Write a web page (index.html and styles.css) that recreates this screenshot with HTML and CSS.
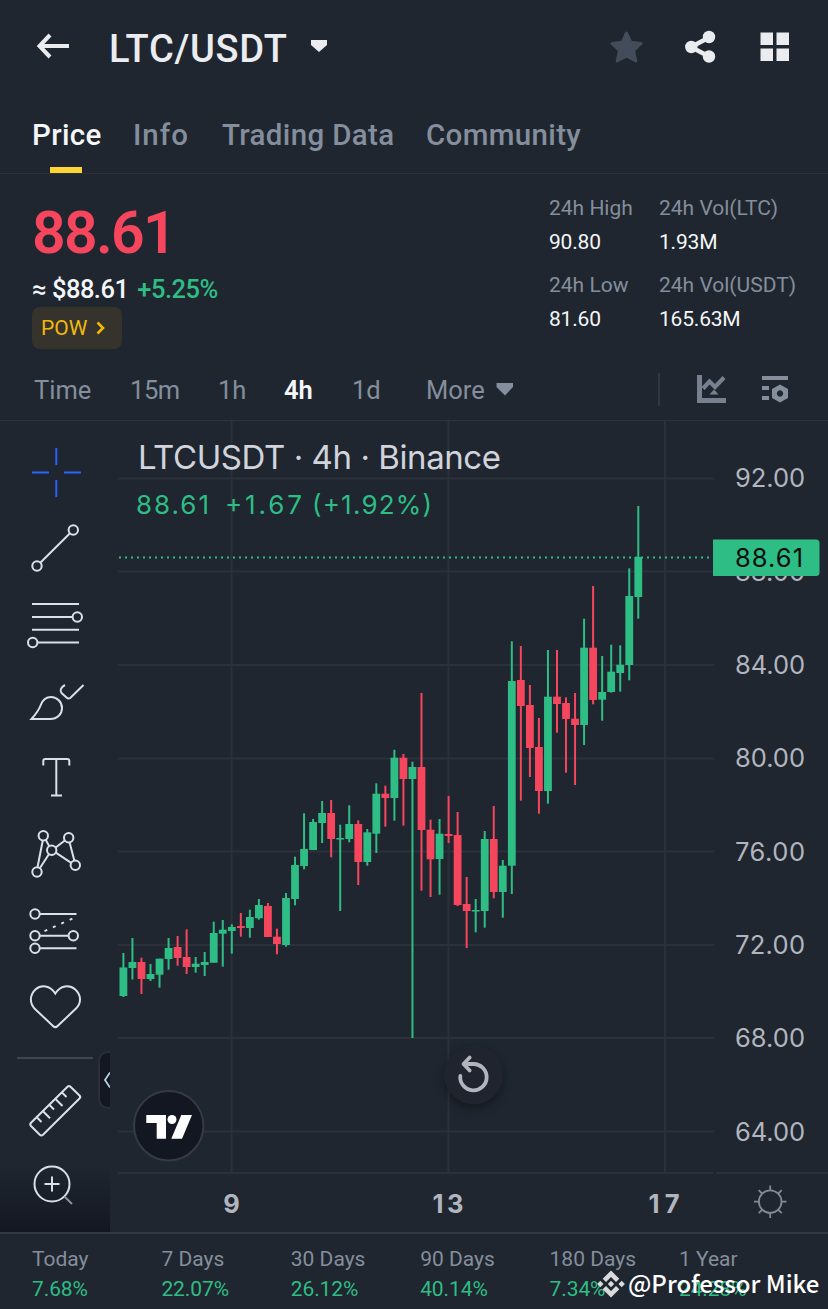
FILE: index.html
```html
<!DOCTYPE html>
<html lang="en">

<head>
    <meta charset="UTF-8">
    <meta name="viewport" content="width=device-width, initial-scale=1.0">
    <title>LTC/USDT</title>
    <link rel="stylesheet" href="styles.css">
</head>

<body>
    <header class="topbar">
        <svg class="back" width="34" height="28" viewBox="0 0 34 28">
            <path d="M14 2 L3.500 13 L14 24 M4 13 H33" fill="none" stroke="#eaecef" stroke-width="4" />
        </svg>
        <h1 class="pair">LTC/USDT</h1>
        <svg class="caret" width="16" height="13" viewBox="0 0 16 13">
            <path d="M0 0 H16 V5 L8 12 L0 5 Z" fill="#eaecef" />
        </svg>
        <div class="actions">
            <svg width="34" height="34" viewBox="0 0 34 34">
                <path d="M16.500 3 L20.800 12.300 L31 13.500 L23.500 20.500 L25.800 31 L16.500 26 L7.200 31 L9.500 20.500 L2 13.500 L12.200 12.300 Z" fill="#434c5a" stroke="#434c5a" stroke-width="3" stroke-linejoin="round" />
            </svg>
            <svg class="share" width="34" height="34" viewBox="0 0 34 34">
                <path d="M26 7.500 L8 17 L26 26.500" fill="none" stroke="#eaecef" stroke-width="4.500" />
                <circle cx="26" cy="7" r="6.200" fill="#eaecef" />
                <circle cx="8.300" cy="17" r="6.200" fill="#eaecef" />
                <circle cx="26" cy="26.500" r="6.200" fill="#eaecef" />
            </svg>
            <svg width="30" height="30" viewBox="0 0 30 30">
                <path d="M0.500 0.500h12.500v12.500h-12.500z M16.500 0.500h12.500v12.500h-12.500z M0.500 16.500h12.500v12.500h-12.500z M16.500 16.500h12.500v12.500h-12.500z" fill="#eaecef" />
            </svg>
        </div>
    </header>

    <nav class="tabs">
        <a class="tab tab-price active">Price</a>
        <a class="tab tab-info">Info</a>
        <a class="tab tab-data">Trading Data</a>
        <a class="tab tab-community">Community</a>
    </nav>

    <section class="summary">
        <div class="quote">
            <div class="last">88.61</div>
            <div class="fiat">≈ $88.61 <span class="up">+5.25%</span></div>
            <a class="tag">POW
                <svg width="9" height="14" viewBox="0 0 9 14">
                    <path d="M1.500 1.500 L7 7 L1.500 12.500" fill="none" stroke="#f0b90b" stroke-width="2.600" />
                </svg>
            </a>
        </div>
        <dl class="stats">
            <div><dt>24h High</dt><dd>90.80</dd></div>
            <div><dt>24h Vol(LTC)</dt><dd>1.93M</dd></div>
            <div><dt>24h Low</dt><dd>81.60</dd></div>
            <div><dt>24h Vol(USDT)</dt><dd>165.63M</dd></div>
        </dl>
    </section>

    <div class="intervals">
        <span class="iv iv-time">Time</span>
        <span class="iv iv-15m">15m</span>
        <span class="iv iv-1h">1h</span>
        <span class="iv iv-4h active">4h</span>
        <span class="iv iv-1d">1d</span>
        <span class="iv iv-more">More</span>
        <svg width="18" height="13" viewBox="0 0 18 13">
            <path d="M0.500 0 H17 V4 L9 12.500 L0.500 4 Z" fill="#848e9c" />
        </svg>
        <div class="tools">
            <svg width="30" height="30" viewBox="0 0 30 30">
                <path d="M2.500 1 V26.500 H29" fill="none" stroke="#76808f" stroke-width="5" />
                <path d="M6 14.500 L12.500 7.500 L18 13 L27 3.500" fill="none" stroke="#76808f" stroke-width="4.200" />
                <path d="M12.500 20.500 L17 15.500 L21.500 20.500 Z" fill="#76808f" />
            </svg>
            <svg width="28" height="28" viewBox="0 0 28 28">
                <path d="M1 1h26v4h-26z M1 11h7v4h-7z M1 21h7v4h-7z" fill="#848e9c" />
                <path fill-rule="evenodd" d="M19 9.500 L27 14 V23 L19 27.500 L11 23 V14 Z M19 15.300 a3.200 3.200 0 1 0 .01 0 Z" fill="#848e9c" />
            </svg>
        </div>
    </div>

    <main class="chart">
        <aside class="toolbar">
            <svg class="tool cross" viewBox="0 0 110 76">
                <path d="M56.300 14 V31 M56.300 46 V63 M32 38.500 H49 M64 38.500 H81" />
            </svg>
            <svg class="tool" viewBox="0 0 110 76">
                <path d="M40.300 52.700 L70 23.300" />
                <circle cx="73.300" cy="20" r="4.700" />
                <circle cx="37" cy="56" r="4.700" />
            </svg>
            <svg class="tool" viewBox="0 0 110 76">
                <path d="M32 18 H79 M32 31 H72.500 M32 43.700 H79 M37.500 56.500 H79" />
                <circle cx="77.300" cy="31" r="4.700" />
                <circle cx="32.700" cy="56.500" r="4.700" />
            </svg>
            <svg class="tool" viewBox="0 0 110 76">
                <path d="M65 23 C61 25 59.500 28.500 61.500 31 L66.500 35.500 Q68.500 37.300 70.500 35.700 L83.500 23" />
                <path d="M31.500 57 H50 C57.500 57 62 52 62 46 C62 40 57 35 51 35 C46.500 35 43 37.500 41 42.500 C39 48 36 52 31.500 57 Z" />
            </svg>
            <svg class="tool" viewBox="0 0 110 76">
                <path d="M43.300 27.500 V23 Q43.300 21 45.300 21 H67.300 Q69.300 21 69.300 23 V27.500 M56.300 21 V57.500 M51 57.500 H62" />
            </svg>
            <svg class="tool" viewBox="0 0 110 76">
                <path d="M42.800 26.300 L37.500 53.300 M45.700 25.700 L49.300 32.300 M55.700 33.500 L64.800 26.500 M69.600 28.400 L74.400 46.700 M55.800 38.700 L71.200 48.900 M48.900 40.200 L39.800 54.200" />
                <circle cx="43.300" cy="21.700" r="4.700" />
                <circle cx="68.700" cy="23.700" r="4.700" />
                <circle cx="51.700" cy="36.300" r="4.700" />
                <circle cx="37" cy="58" r="4.700" />
                <circle cx="75.300" cy="51.300" r="4.700" />
            </svg>
            <svg class="tool" viewBox="0 0 110 76">
                <path d="M40 24 H76.500 M40 45.700 H68.500 M40 58.300 H76.500" />
                <path d="M44.500 41.200 L72.500 28.500" stroke-dasharray="3 6.200" />
                <circle cx="35" cy="24" r="4.700" />
                <circle cx="35" cy="45.700" r="4.700" />
                <circle cx="73.300" cy="45.700" r="4.700" />
                <circle cx="35" cy="58.300" r="4.700" />
            </svg>
            <svg class="tool" viewBox="0 0 110 76">
                <path d="M55.300 27.500 C50 19 41 18.500 35.700 23.300 C29.500 29 29.500 37 34.500 42.500 L53 60 Q55.300 62.300 57.600 60 L76 42.500 C81.500 37 81.500 29 75 23.300 C69.500 18.500 60.500 19 55.300 27.500 Z" />
            </svg>
            <hr class="sep">
            <svg class="tool" viewBox="0 0 110 76">
                <path d="M67.500 15.700 Q69 14.200 70.500 15.700 L79.500 24.500 Q81 26 79.500 27.500 L43 63.800 Q41.300 65.300 39.800 63.800 L31 55 Q29.500 53.300 31 51.800 Z" />
                <path d="M37 46.500 L41.500 51 M43 40.300 L50 47.300 M49.500 34 L54 38.500 M55.500 28 L62.500 35 M62 21.500 L66.500 26" />
            </svg>
            <svg class="tool" viewBox="0 0 110 76">
                <circle cx="52" cy="37" r="17.500" />
                <path d="M44.500 37 H59.500 M52 29.500 V44.500" />
                <path d="M64.500 49.500 L72 57" stroke="#8c9099" />
            </svg>
            <div class="collapse">
                <svg width="8" height="16" viewBox="0 0 8 16">
                    <path d="M8 0.500 L3 8 L8 15.500" fill="none" stroke="#b5d0dc" stroke-width="1.800" />
                </svg>
            </div>
        </aside>

        <div class="plot">
            <svg class="plot-svg" width="718" height="811" viewBox="110 421 718 811">
                <path class="grid" d="M231.500 421 V1172 M448.500 421 V1172 M665 421 V1172 M118 478.500 H714 M118 571.500 H714 M118 665 H714 M118 758.500 H714 M118 851.500 H714 M118 945 H714 M118 1038 H714 M118 1131.500 H714 M118 1173 H713.500 M716 1173 H828" />
                <g id="candles"></g>
                <path class="last-line" d="M119 557.500 H713" />
                <g class="axis">
                    <text x="735" y="487" textLength="70">92.00</text>
                    <text x="735" y="580.500" textLength="70">88.00</text>
                    <text x="735" y="674" textLength="70">84.00</text>
                    <text x="735" y="767" textLength="70">80.00</text>
                    <text x="735" y="860.500" textLength="70">76.00</text>
                    <text x="735" y="954" textLength="70">72.00</text>
                    <text x="735" y="1047" textLength="70">68.00</text>
                    <text x="735" y="1140.500" textLength="70">64.00</text>
                </g>
                <path d="M713 539.500 H816 Q819.500 539.500 819.500 543 V572.500 Q819.500 576 816 576 H713 Z" fill="#2ebd85" />
                <text class="price-label" x="735" y="566.500" textLength="68">88.61</text>
                <g class="dates">
                    <text x="231.500" y="1213">9</text>
                    <text x="448" y="1213" textLength="31">13</text>
                    <text x="664" y="1213" textLength="31">17</text>
                </g>
                <g fill="none" stroke="#848993" stroke-width="1.800">
                    <circle cx="770.200" cy="1201.700" r="11.300" />
                    <path d="M770.200 1190 v-4.500 M770.200 1213.500 v4.500 M758.500 1201.700 h-4.500 M782 1201.700 h4.500 M762 1193.500 l-3.300 -3.300 M778.400 1193.500 l3.300 -3.300 M762 1209.900 l-3.300 3.300 M778.400 1209.900 l3.300 3.300" />
                </g>
                <text class="legend-title" x="138" y="469" textLength="363">LTCUSDT · 4h · Binance</text>
                <g class="legend-values">
                    <text x="136" y="514" textLength="73">88.61</text>
                    <text x="225" y="514" textLength="77">+1.67</text>
                    <text x="312" y="514" textLength="120">(+1.92%)</text>
                </g>
                <circle cx="168.700" cy="1125.700" r="34.700" fill="#131722" stroke="#363a45" stroke-width="2" />
                <path d="M146.300 1115 H166 V1138.700 H156.700 V1123 H146.300 Z M181.300 1115 H192 L182 1138.700 H171.300 Z" fill="#fff" />
                <circle cx="172" cy="1119.500" r="4.500" fill="#fff" />
                <circle class="reset" cx="473.700" cy="1074.700" r="29.500" />
                <path d="M460.300 1076 A13.200 13.200 0 1 0 473.500 1064 H464 M469.700 1057.500 L463.500 1064 L469.700 1070.500" fill="none" stroke="#b2b5be" stroke-width="3.800" stroke-linecap="round" stroke-linejoin="round" />
            </svg>
        </div>
    </main>

    <footer class="periods">
        <div><span>Today</span><b>7.68%</b></div>
        <div><span>7 Days</span><b>22.07%</b></div>
        <div><span>30 Days</span><b>26.12%</b></div>
        <div><span>90 Days</span><b>40.14%</b></div>
        <div><span>180 Days</span><b>7.34%</b></div>
        <div><span>1 Year</span><b>24.28%</b></div>
        <div class="credit">
            <svg width="28" height="28" viewBox="0 0 28 28">
                <path d="M14 0.500 L22.300 8.800 L19 12 L14 7 L9 12 L5.700 8.800 Z M14 27.500 L22.300 19.200 L19 16 L14 21 L9 16 L5.700 19.200 Z M3.300 10.800 L6.500 14 L3.300 17.200 L0.100 14 Z M24.700 10.800 L27.900 14 L24.700 17.200 L21.500 14 Z M14 10.800 L17.200 14 L14 17.200 L10.800 14 Z" fill="#d9dadc" />
            </svg>
            <span>@Professor Mike</span>
        </div>
    </footer>

    <script src="script.js"></script>
</body>

</html>
```
FILE: styles.css
```css
html,
body {
    margin: 0;
    padding: 0;
}

body {
    width: 828px;
    height: 1309px;
    overflow: hidden;
    background: #1f262f;
    color: #eaecef;
    font-family: Roboto, "Liberation Sans", sans-serif;
}

.topbar {
    display: flex;
    align-items: center;
    height: 94px;
    padding: 0 38px 0 36px;
}

.pair {
    margin: 3px 0 0 39px;
    font-size: 38px;
    font-weight: 500;
    line-height: 44px;
    letter-spacing: 0.7px;
}

.caret {
    margin: -2px 0 0 23px;
}

.actions {
    display: flex;
    align-items: center;
    gap: 41px;
    margin-left: auto;
}

.share {
    margin: 0 2px 0 -2px;
}

.tabs {
    display: flex;
    height: 79px;
    padding-left: 32px;
    border-bottom: 1px solid #2b323c;
}

.tab {
    position: relative;
    padding-top: 23px;
    color: #848e9c;
    font-size: 29.5px;
    font-weight: 500;
    line-height: 36px;
    letter-spacing: 0.35px;
}

.tab-price {
    width: 101px;
}

.tab-info {
    width: 89px;
    letter-spacing: 1px;
}

.tab-data {
    width: 204px;
}

.tab.active {
    color: #f5f6f8;
}

.tab.active::after {
    content: "";
    position: absolute;
    left: 18px;
    bottom: 0;
    width: 32px;
    height: 6px;
    background: #fcd535;
}

.summary {
    display: flex;
    justify-content: space-between;
    height: 184px;
}

.quote {
    padding: 28px 0 0 32px;
}

.last {
    color: #f6465d;
    font-size: 59px;
    font-weight: 600;
    line-height: 62px;
    letter-spacing: -1.7px;
}

.fiat {
    margin-top: 10px;
    color: #f5f6f8;
    font-size: 25.5px;
    font-weight: 500;
    line-height: 30px;
    letter-spacing: -0.5px;
}

.up {
    margin-left: 3px;
    color: #2ebd85;
}

.tag {
    display: flex;
    align-items: center;
    gap: 9px;
    width: 81px;
    height: 42px;
    margin-top: 3px;
    padding-left: 9px;
    border-radius: 8px;
    background: #35332b;
    color: #f0b90b;
    font-size: 21px;
}

.stats {
    display: grid;
    grid-template-columns: 110px 169px;
    grid-auto-rows: 76.5px;
    margin: 20px 0 0;
    font-size: 21px;
    line-height: 28px;
}

.stats dt {
    color: #848e9c;
    white-space: nowrap;
}

.stats dd {
    margin: 6px 0 0;
    color: #f5f6f8;
    letter-spacing: -0.2px;
}

.intervals {
    display: flex;
    align-items: center;
    height: 62px;
    padding-left: 34px;
    border-bottom: 1px solid #2b323c;
    color: #848e9c;
    font-size: 25.5px;
}

.iv {
    flex: none;
    padding-top: 2px;
}

.iv-time {
    width: 96px;
}

.iv-15m {
    width: 88px;
    letter-spacing: -0.4px;
}

.iv-1h {
    width: 66px;
}

.iv-4h {
    width: 68px;
    color: #f5f6f8;
    font-weight: 600;
}

.iv-1d {
    width: 74px;
}

.iv-more {
    width: 70px;
}

.tools {
    display: flex;
    align-items: center;
    gap: 34px;
    height: 33px;
    margin-left: auto;
    padding: 0 39px 0 37px;
    border-left: 2px solid #2f3741;
}

.chart {
    display: flex;
    height: 811px;
}

.toolbar {
    position: relative;
    width: 110px;
    padding-top: 13px;
    box-sizing: border-box;
    background: linear-gradient(#1f262f 745px, #131722 811px);
}

.tool {
    display: block;
    width: 110px;
    height: 76px;
    fill: none;
    stroke: #dbdfe8;
    stroke-width: 2;
}

.cross {
    stroke: #2962ff;
}

.sep {
    width: 76px;
    height: 2px;
    margin: 15px 17px 12px;
    border: 0;
    background: #40454f;
}

.collapse {
    position: absolute;
    right: 0;
    top: 630px;
    display: flex;
    align-items: center;
    justify-content: flex-end;
    width: 10px;
    height: 54px;
    border: 2px solid #2a2f3a;
    border-right: 0;
    border-radius: 10px 0 0 10px;
    background: #131722;
}

.plot-svg {
    display: block;
    font-family: Inter, "Liberation Sans", sans-serif;
}

.grid {
    fill: none;
    stroke: #2b313b;
    stroke-width: 2;
}

.candle-up {
    fill: #2ebd85;
}

.candle-down {
    fill: #f6465d;
}

.last-line {
    stroke: #2ebd85;
    stroke-width: 2;
    stroke-dasharray: 2 4;
}

.axis {
    fill: #b2b5be;
    font-size: 25.5px;
}

.price-label {
    fill: #0b0e11;
    font-size: 25.5px;
}

.dates {
    fill: #b2b5be;
    font-size: 25.5px;
    font-weight: 700;
    text-anchor: middle;
}

.legend-title {
    fill: #d1d4dc;
    font-size: 33px;
}

.legend-values {
    fill: #2ebd85;
    font-size: 26px;
}

.reset {
    fill: #1f242f;
    filter: drop-shadow(0 4px 5px rgba(0, 0, 0, .35));
}

.periods {
    position: relative;
    display: grid;
    grid-template-columns: repeat(6, 129.4px);
    height: 75px;
    padding: 10px 0 0 32px;
    border-top: 2px solid #323944;
    box-sizing: border-box;
    font-size: 21px;
}

.periods span,
.periods b {
    display: block;
    font-weight: 400;
    line-height: 30px;
}

.periods span {
    color: #848e9c;
}

.periods b {
    color: #2ebd85;
    letter-spacing: -0.1px;
}

.credit {
    position: absolute;
    left: 597px;
    top: 36px;
    display: flex;
    align-items: center;
    gap: 3px;
}

.periods .credit span {
    margin-top: -3px;
    color: #fff;
    font-family: "Noto Sans CJK SC", "Noto Sans", sans-serif;
    font-size: 24px;
    font-weight: 500;
    white-space: nowrap;
}
```
FILE: script.js
```js
// up/down, body top, body bottom, high, low (y positions in the plot)
var candles = [
    ['u', 967.5, 996, 953, 997],
    ['u', 962, 968, 938, 979.5],
    ['d', 962, 979, 957.7, 994],
    ['u', 974, 979, 964, 981],
    ['u', 958.7, 974.7, 958.7, 987.7],
    ['u', 948, 959, 938, 969.7],
    ['d', 947, 958, 936, 965.7],
    ['d', 957, 967, 929.3, 974],
    ['u', 963.7, 967, 957, 972.7],
    ['u', 962, 965, 952, 976],
    ['u', 933, 962.7, 921.7, 962.7],
    ['u', 929.7, 933.7, 920, 966.7],
    ['u', 927, 931, 924.3, 953.7],
    ['d', 926, 928, 913, 936.7],
    ['u', 917, 928, 909.7, 937.7],
    ['u', 905, 918.3, 899, 919.7],
    ['d', 906, 937, 903, 937],
    ['d', 936.7, 944, 928.7, 954.3],
    ['u', 898, 945, 893, 946.7],
    ['u', 865, 899, 856.7, 905.3],
    ['u', 849, 866, 813.3, 869.3],
    ['u', 822, 850, 819, 850],
    ['u', 813, 823, 801, 843],
    ['d', 813, 839, 800, 857.3],
    ['u', 838, 839, 824.7, 911],
    ['u', 824, 839, 805.3, 842.3],
    ['d', 824, 862, 820.3, 885],
    ['u', 832.3, 862, 829, 865.7],
    ['u', 793.7, 833.7, 783.3, 853],
    ['d', 793.7, 798, 785.7, 826.7],
    ['u', 757.7, 798, 749.7, 820.7],
    ['d', 757.7, 779, 754, 825.7],
    ['u', 767, 779, 761.7, 1038],
    ['d', 767, 830, 693, 890.7],
    ['d', 829.7, 859.3, 819.7, 897],
    ['u', 833.7, 859, 819, 894.7],
    ['d', 834, 836, 796, 843],
    ['d', 835, 905, 812, 906],
    ['d', 904, 911, 877, 948],
    ['u', 910, 911, 899, 932.3],
    ['u', 839, 911, 831, 927.7],
    ['d', 839, 892, 806, 898.3],
    ['u', 865.7, 892, 860, 917.7],
    ['u', 681, 865.7, 641.3, 894],
    ['d', 680, 706, 646, 800.7],
    ['d', 705, 748, 685, 777],
    ['d', 747, 791, 718, 813.7],
    ['u', 696.7, 791, 650, 803.7],
    ['d', 696.7, 704, 650, 732.7],
    ['d', 703, 719, 697.3, 772.7],
    ['d', 718.7, 725, 693, 785],
    ['u', 647.7, 725, 618.7, 745],
    ['d', 647.7, 700, 586, 704.3],
    ['u', 692, 699.7, 656, 720.7],
    ['u', 671.7, 692, 644.7, 692.7],
    ['u', 664.7, 673, 645.3, 691.7],
    ['u', 596, 665, 568.3, 680.3],
    ['u', 557, 597, 506, 618.7]
];

var group = document.getElementById('candles');

function addRect(cls, x, y, w, h) {
    var r = document.createElementNS('http://www.w3.org/2000/svg', 'rect');
    r.setAttribute('class', cls);
    r.setAttribute('x', x);
    r.setAttribute('y', y);
    r.setAttribute('width', w);
    r.setAttribute('height', h);
    group.appendChild(r);
}

candles.forEach(function (c, i) {
    var x = 123.4 + i * 9.033;
    var cls = c[0] === 'u' ? 'candle-up' : 'candle-down';
    addRect(cls, x - 1, c[3], 2, c[4] - c[3]);
    addRect(cls, x - 3.9, c[1], 7.8, Math.max(c[2] - c[1], 1.5));
});
```
